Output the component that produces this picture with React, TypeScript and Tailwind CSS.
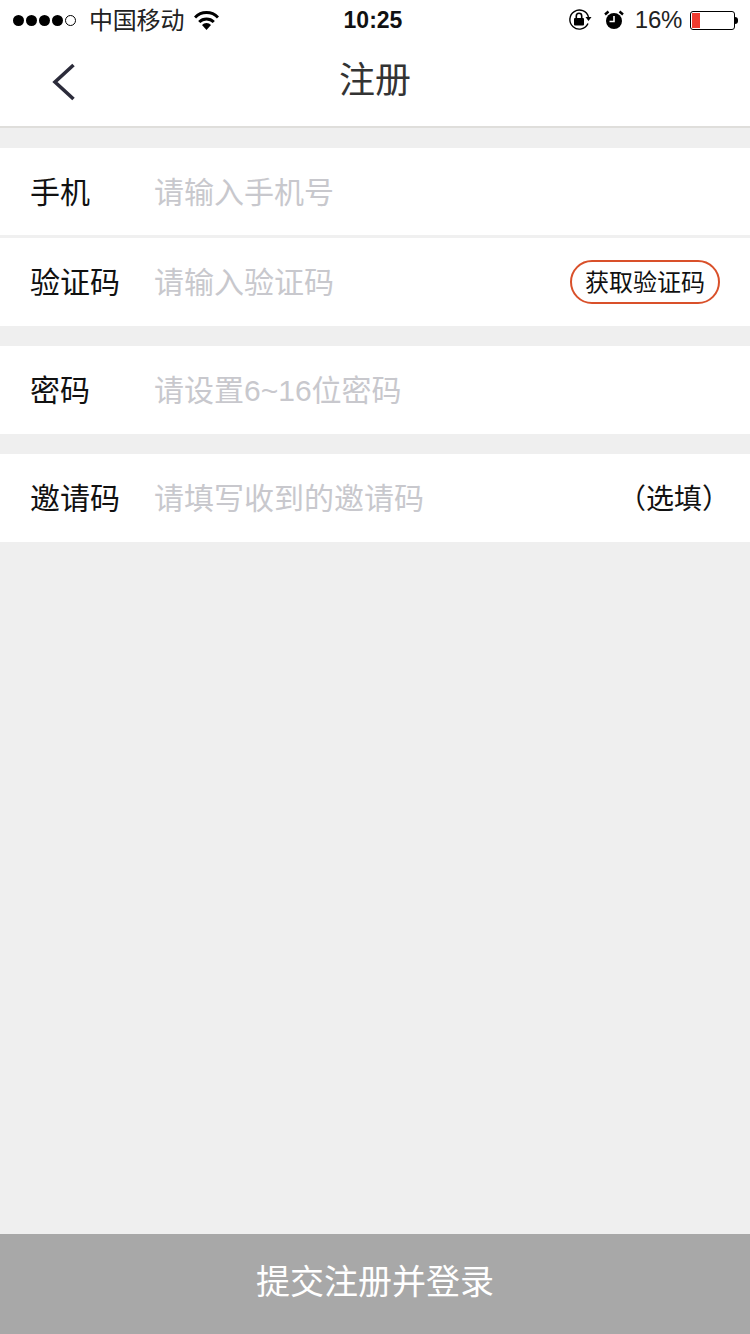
const cjk = "font-['Liberation_Sans','Noto_Sans_CJK_SC',sans-serif]";

function Wifi() {
  return (
    <svg width="25" height="19" viewBox="0 0 25 19" className="ml-[10px]">
      <path d="M1 6.5 A16 16 0 0 1 24 6.5" fill="none" stroke="#000" strokeWidth="3" />
      <path d="M5.2 11 A10.4 10.4 0 0 1 19.8 11" fill="none" stroke="#000" strokeWidth="3" />
      <path d="M12.5 19 L8 14 A6 6 0 0 1 17 14 Z" fill="#000" />
    </svg>
  );
}

function RotationLock() {
  return (
    <svg width="24" height="24" viewBox="0 0 24 24">
      <path d="M20 15.5 A9.5 9.5 0 1 1 20.5 9" fill="none" stroke="#000" strokeWidth="1.4" />
      <path d="M17.5 9 L23.5 9 L20.5 13 Z" fill="#000" />
      <rect x="6" y="10" width="10" height="7.5" rx="1" fill="#000" />
      <path d="M8.3 10.5 V8 A2.7 2.7 0 0 1 13.7 8 V10.5" fill="none" stroke="#000" strokeWidth="1.6" />
    </svg>
  );
}

function Alarm() {
  return (
    <svg width="20" height="20" viewBox="0 0 20 20">
      <circle cx="10" cy="11" r="8" fill="#000" />
      <path d="M10 6 V11.5 H5.5" fill="none" stroke="#fff" strokeWidth="1.6" />
      <path d="M1 4.5 L4.5 1.5 M19 4.5 L15.5 1.5" stroke="#000" strokeWidth="2.4" />
    </svg>
  );
}

function StatusBar() {
  return (
    <div className="relative flex h-10 items-center pl-[13px] pr-[12px] text-black">
      <div className="flex items-center gap-[2px]">
        {[0, 1, 2, 3].map((i) => (
          <span key={i} className="h-[11px] w-[11px] rounded-full bg-black" />
        ))}
        <span className="h-[11px] w-[11px] rounded-full border border-black" />
      </div>
      <span className="ml-[13px] mt-[2px] text-[24px] leading-none tracking-[-0.2px] text-[#222]">中国移动</span>
      <Wifi />
      <span className="absolute left-0 right-[4px] text-center text-[23px] font-bold leading-none text-[#111]">
        10:25
      </span>
      <div className="ml-auto flex items-center">
        <RotationLock />
        <span className="ml-[12px] flex"><Alarm /></span>
        <span className="ml-[11px] text-[24px] leading-none tracking-[-0.3px] text-[#222]">16%</span>
        <div className="ml-[8px] flex h-[19px] w-[45px] items-center rounded-[3px] border border-black p-px">
          <span className="h-full w-[8px] bg-[#f03c30]" />
        </div>
        <span className="h-[7px] w-[3px] rounded-r-full bg-black" />
      </div>
    </div>
  );
}

function Field({ label, hint, right, divider }: { label: string; hint: string; right?: React.ReactNode; divider?: boolean }) {
  return (
    <div className={`flex items-center bg-white pl-[30px] pr-[30px] ${divider ? 'h-[90px] border-b-[3px] border-[#f0f0f0]' : 'h-[88px]'}`}>
      <span className="mt-[2px] w-[124px] text-[30px] leading-none text-[#111]">{label}</span>
      <span className="mt-[2px] text-[30px] leading-none text-[#c8c8cd]">{hint}</span>
      {right && <div className="ml-auto">{right}</div>}
    </div>
  );
}

export default function App() {
  return (
    <div className={`flex h-[1334px] w-[750px] flex-col overflow-hidden bg-[#efefef] ${cjk}`}>
      {/* Header */}
      <div className="h-[128px] border-b-2 border-[#dfdedb] bg-white">
        <StatusBar />
        <div className="relative flex h-[82px] items-center justify-center">
          <svg width="24" height="38" viewBox="0 0 24 38" className="absolute left-[52px] top-[23px]">
            <path d="M21.5 2 L3 19 L21.5 36" fill="none" stroke="#2b2b3a" strokeWidth="3.6" />
          </svg>
          <span className="text-[36px] leading-none text-[#333]">注册</span>
        </div>
      </div>

      {/* Form */}
      <div className="mt-[20px]">
        <Field label="手机" hint="请输入手机号" divider />
        <Field
          label="验证码"
          hint="请输入验证码"
          right={
            <button className="flex h-[44px] w-[150px] items-center justify-center rounded-full border-2 border-[#d9502a] pt-[2px] text-[24px] leading-none text-[#111]">
              获取验证码
            </button>
          }
        />
      </div>
      <div className="mt-[20px]">
        <Field label="密码" hint="请设置6~16位密码" />
      </div>
      <div className="mt-[20px]">
        <Field
          label="邀请码"
          hint="请填写收到的邀请码"
          right={<span className="-mr-[10px] mt-[4px] block text-[28px] leading-none text-[#111]">（选填）</span>}
        />
      </div>

      {/* Submit */}
      <button className="mt-auto h-[100px] w-full bg-[#a8a8a8] pb-[4px] text-[34px] leading-none text-white">
        提交注册并登录
      </button>
    </div>
  );
}
